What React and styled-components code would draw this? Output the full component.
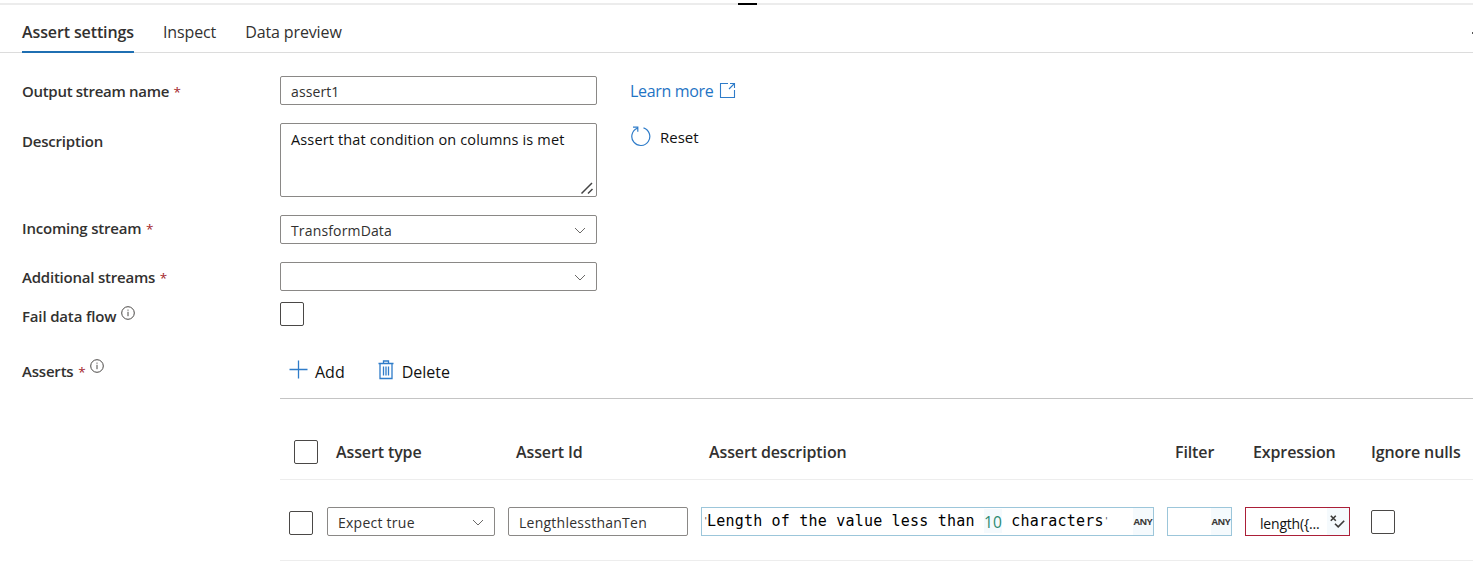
import React, { useState } from 'react'
import styled, { createGlobalStyle } from 'styled-components'

const tabs = ['Assert settings', 'Inspect', 'Data preview']

function Chevron() {
    return (
        <svg width="12" height="7" viewBox="0 0 12 7" fill="none" stroke="#6b6968" strokeWidth="1">
            <path d="M1 1l5 5 5-5" />
        </svg>
    )
}

function Info({ lift }) {
    return (
        <InfoIcon $lift={lift} width="14" height="14" viewBox="0 0 14 14" fill="none" stroke="#4a4846" strokeWidth="1">
            <circle cx="7" cy="7" r="6.3" />
            <path d="M7 5.8v4.4M7 3.6v1.1" />
        </InfoIcon>
    )
}

function App() {

    const [active, setActive] = useState('Assert settings');

  return (
    <Panel>
        <GlobalStyle />
        <Splitter>
            <Handle />
        </Splitter>

        <TabBar>
            {tabs.map((tab) => (
                <Tab key={tab} $active={tab === active} onClick={() => setActive(tab)}>
                    {tab}
                </Tab>
            ))}
            <Collapse />
        </TabBar>

        <Form>
            <Row $height={29} $gap={18}>
                <Label $top={4} $track={-0.3}>Output stream name <Star>*</Star></Label>
                <Field $width={317}>assert1</Field>
                <Side>
                    <Link>Learn more</Link>
                    <svg width="17" height="17" viewBox="0 0 17 17" fill="none" stroke="#2f7cc9" strokeWidth="1.1">
                        <path d="M9 1.5H1.5v14h14V8M11 1.5h4.5V6M15.5 1.5L10 7" />
                    </svg>
                </Side>
            </Row>

            <Row $height={74} $gap={18}>
                <Label $top={7} $track={-0.2}>Description</Label>
                <Area>
                    Assert that condition on columns is met
                    <Grip width="14" height="14" viewBox="0 0 14 14" fill="none" stroke="#444" strokeWidth="1.5">
                        <path d="M1.5 12.5L12 2M8 12.5l4.5-4.5" />
                    </Grip>
                </Area>
                <Side $reset>
                    <svg width="21" height="21" viewBox="0 0 21 21" fill="none" stroke="#2f7cc9" strokeWidth="1.2">
                        <path d="M13.5 1.9A9 9 0 1 1 7.3 2.2M3 1.2h4.8v4.6" />
                    </svg>
                    <span>Reset</span>
                </Side>
            </Row>

            <Row $height={29} $gap={18}>
                <Label $top={2} $track={-0.2}>Incoming stream <Star>*</Star></Label>
                <Field $width={317} $track={0.15}>TransformData<Chevron /></Field>
            </Row>

            <Row $height={29} $gap={11}>
                <Label $top={4} $track={-0.22}>Additional streams <Star>*</Star></Label>
                <Field $width={317}><span /><Chevron /></Field>
            </Row>

            <Row $height={24} $gap={30}>
                <Label $top={3} $track={-0.16}>Fail data flow <Info lift={2} /></Label>
                <Checkbox />
            </Row>

            <Row $height={227} $gap={0}>
                <Label $top={3} $track={-0.2}>Asserts <Star>*</Star> <Info lift={4} /></Label>
                <Asserts>
                    <Toolbar>
                        <Action $gap={7}>
                            <svg width="19" height="19" viewBox="0 0 19 19" fill="none" stroke="#2f7cc9" strokeWidth="1.3">
                                <path d="M9.5 .5v18M.5 9.5h18" />
                            </svg>
                            <span>Add</span>
                        </Action>
                        <Action $gap={8}>
                            <svg width="16" height="20" viewBox="0 0 16 20" fill="none" stroke="#2f7cc9" strokeWidth="1.3">
                                <path d="M.5 3.5h15M5.5 3.5v-2.5h5v2.5M2 3.5v15h12v-15M5.5 6.5v9M8 6.5v9M10.5 6.5v9" />
                            </svg>
                            <span>Delete</span>
                        </Action>
                    </Toolbar>

                    <HeadRow>
                        <Checkbox />
                        <Head $width={180}>Assert type</Head>
                        <Head $width={193}>Assert Id</Head>
                        <Head $width={466}>Assert description</Head>
                        <Head $width={78}>Filter</Head>
                        <Head $width={118}>Expression</Head>
                        <Head $width={100}>Ignore nulls</Head>
                    </HeadRow>

                    <DataRow>
                        <Checkbox $lead />
                        <Field $width={168} $track={0.25}>Expect true<Chevron /></Field>
                        <Field $width={180} $track={0.25}>LengthlessthanTen</Field>
                        <Expression $width={453}>
                            <Code><Quote>'</Quote>Length of the value less than <Num>10</Num> characters<Quote>'</Quote></Code>
                            <Any>ANY</Any>
                        </Expression>
                        <Expression $width={65}>
                            <span />
                            <Any>ANY</Any>
                        </Expression>
                        <Expression $width={105} $invalid>
                            <Formula>{'length({...'}</Formula>
                            <CheckMark>
                                <svg width="15" height="13" viewBox="0 0 15 13" fill="none" stroke="#3b3a39" strokeWidth="1.6">
                                    <path d="M.8 .8l5 5M5.8 .8l-5 5M5 8.7l3.2 3.2 6-6.2" />
                                </svg>
                            </CheckMark>
                        </Expression>
                        <Checkbox $trail />
                    </DataRow>
                </Asserts>
            </Row>
        </Form>
    </Panel>
  )
}

export default App

const GlobalStyle = createGlobalStyle`
    *{
        box-sizing: border-box;
    }

    body{
        margin: 0;
        background: #fff;
        overflow: hidden;
        font-family: "Open Sans", "Noto Sans", sans-serif;
    }

    svg{
        flex: none;
    }
`

const Panel = styled.div`
    height: 583px;
    overflow: hidden;
    color: #323130;
`

const Splitter = styled.div`
    display: flex;
    justify-content: center;
    height: 5px;
    padding: 3px 0 0 22px;
    background: linear-gradient(#fff 3px, #ececec 3px);
`

const Handle = styled.div`
    width: 19px;
    height: 2px;
    background: #000;
`

const TabBar = styled.div`
    display: flex;
    column-gap: 29px;
    height: 48px;
    padding-left: 22px;
    border-bottom: 1px solid #dcdcdc;
`

const Tab = styled.div`
    height: 48px;
    line-height: 55px;
    font-size: 16px;
    font-weight: ${(p) => (p.$active ? 600 : 400)};
    letter-spacing: -0.12px;
    white-space: nowrap;
    border-bottom: 2px solid ${(p) => (p.$active ? '#1f6fb2' : 'transparent')};
    cursor: pointer;
`

const Collapse = styled.div`
    width: 1px;
    height: 2px;
    margin: 27px 0 0 auto;
    background: #555;
`

const Form = styled.div`
    padding: 23px 0 0 22px;
`

const Row = styled.div`
    display: flex;
    align-items: flex-start;
    height: ${(p) => p.$height}px;
    margin-bottom: ${(p) => p.$gap}px;
`

const Label = styled.div`
    flex: none;
    width: 258px;
    height: 26px;
    padding-top: ${(p) => p.$top}px;
    font-size: 15px;
    font-weight: 600;
    line-height: 22px;
    letter-spacing: ${(p) => p.$track}px;
    white-space: nowrap;
`

const Star = styled.span`
    margin-left: 1px;
    color: #a4262c;
    font-size: 13.5px;
    font-weight: 400;
`

const InfoIcon = styled.svg`
    margin-left: 1px;
    vertical-align: ${(p) => p.$lift}px;
`

const Field = styled.div`
    flex: none;
    display: flex;
    align-items: center;
    justify-content: space-between;
    width: ${(p) => p.$width}px;
    height: 29px;
    padding: 2px 10px 0 10px;
    border: 1px solid #8a8886;
    border-radius: 2px;
    font-size: 14px;
    letter-spacing: ${(p) => p.$track || 0.1}px;
    white-space: nowrap;
`

const Area = styled.div`
    position: relative;
    flex: none;
    width: 317px;
    height: 74px;
    padding: 5px 10px;
    border: 1px solid #8a8886;
    border-radius: 2px;
    color: #111;
    font-size: 14.5px;
    line-height: 22px;
    letter-spacing: 0.14px;
    white-space: nowrap;
`

const Grip = styled.svg`
    position: absolute;
    right: 2px;
    bottom: 1px;
`

const Side = styled.div`
    display: flex;
    align-items: center;
    column-gap: ${(p) => (p.$reset ? 9 : 6)}px;
    height: ${(p) => (p.$reset ? 28 : 29)}px;
    margin-left: 33px;
    color: #111;
    font-size: ${(p) => (p.$reset ? 15 : 16)}px;

    > svg{
        margin-bottom: ${(p) => (p.$reset ? 2 : 0)}px;
    }
`

const Link = styled.a`
    padding-top: 1px;
    color: #1f74c4;
    letter-spacing: -0.33px;
    cursor: pointer;
`

const Checkbox = styled.div`
    flex: none;
    width: 24px;
    height: 24px;
    margin-top: ${(p) => (p.$lead ? 2 : 0)}px;
    margin-left: ${(p) => (p.$lead ? '-4px' : p.$trail ? '8px' : 0)};
    border: 1px solid #4a4846;
    border-radius: 2px;
`

const Asserts = styled.div`
    flex: 1;
`

const Toolbar = styled.div`
    display: flex;
    column-gap: 33px;
    height: 43px;
    padding: 4px 0 0 9px;
    border-bottom: 1px solid #c4c4c4;
`

const Action = styled.div`
    display: flex;
    align-items: flex-start;
    column-gap: ${(p) => p.$gap}px;
    color: #111;
    font-size: 16px;
    line-height: 24px;
`

const HeadRow = styled.div`
    display: flex;
    align-items: center;
    height: 81px;
    padding: 26px 0 0 14px;
    border-bottom: 1px solid #ededed;

    > div:first-child{
        margin-right: 18px;
    }
`

const Head = styled.div`
    flex: none;
    width: ${(p) => p.$width}px;
    font-size: 16px;
    font-weight: 600;
    letter-spacing: -0.12px;
    white-space: nowrap;
`

const DataRow = styled.div`
    display: flex;
    align-items: center;
    column-gap: 13px;
    height: 81px;
    padding: 3px 0 0 13px;
    border-bottom: 1px solid #ededed;

    > div:first-child{
        margin-right: 1px;
    }
`

const Expression = styled.div`
    flex: none;
    display: flex;
    align-items: center;
    justify-content: space-between;
    width: ${(p) => p.$width}px;
    height: 29px;
    border: 1px solid ${(p) => (p.$invalid ? '#ab1f38' : '#9cc6da')};
`

const Code = styled.div`
    display: flex;
    align-items: center;
    height: 27px;
    padding: 0 0 2px 1px;
    color: #000;
    font-family: "DejaVu Sans Mono", monospace;
    font-size: 15px;
    letter-spacing: 0.2px;
    white-space: pre;
`

const Quote = styled.span`
    width: 4px;
    color: #444;
    font-size: 9px;
`

const Num = styled.span`
    padding-top: 2px;
    color: #2b8a72;
    background: #f5fafd;
    font-family: "Open Sans", sans-serif;
    font-size: 15.5px;
`

const Any = styled.div`
    height: 27px;
    padding: 0 1px;
    background: #f5fafd;
    color: #3b3a39;
    font-size: 9.5px;
    font-weight: 700;
    line-height: 28px;
    letter-spacing: -0.6px;
`

const Formula = styled.div`
    padding: 4px 0 0 14px;
    color: #111;
    font-size: 14px;
    letter-spacing: -0.2px;
`

const CheckMark = styled.div`
    display: flex;
    align-items: center;
    width: 22px;
    height: 27px;
    padding: 0 0 1px 3px;
    background: #f5fafd;
`
